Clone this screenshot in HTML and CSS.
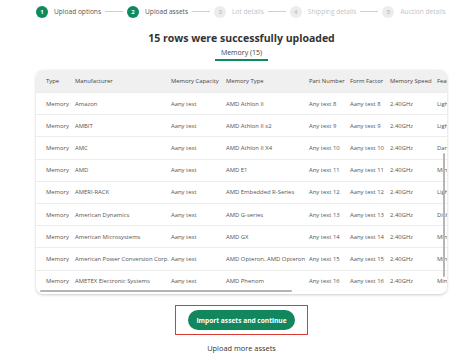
FILE: index.html
```html
<!DOCTYPE html>
<html>
<head>
  <meta charset="utf-8">
  <link rel="stylesheet" href="styles.css">
</head>
<body>
  <div class="page">
    <div class="stepper">
      <div class="step step-done"><span class="step-num">1</span><span class="step-label">Upload options</span></div>
      <div class="step-line"></div>
      <div class="step step-done"><span class="step-num">2</span><span class="step-label">Upload assets</span></div>
      <div class="step-line"></div>
      <div class="step"><span class="step-num">3</span><span class="step-label">Lot details</span></div>
      <div class="step-line"></div>
      <div class="step"><span class="step-num">4</span><span class="step-label">Shipping details</span></div>
      <div class="step-line"></div>
      <div class="step"><span class="step-num">5</span><span class="step-label">Auction details</span></div>
    </div>

    <h1 class="title">15 rows were successfully uploaded</h1>
    <div class="tabs">
      <span class="tab tab-active">Memory (15)</span>
    </div>

    <div class="table-card">
      <table class="assets">
        <colgroup>
          <col style="width: 39px">
          <col style="width: 96px">
          <col style="width: 55px">
          <col style="width: 83px">
          <col style="width: 41px">
          <col style="width: 40px">
          <col style="width: 47px">
          <col style="width: 60px">
        </colgroup>
        <thead>
          <tr>
            <th>Type</th><th>Manufacturer</th><th>Memory Capacity</th><th>Memory Type</th><th>Part Number</th><th>Form Factor</th><th>Memory Speed</th><th>Features</th>
          </tr>
        </thead>
        <tbody>
          <tr><td>Memory</td><td>Amazon</td><td>Aany text</td><td>AMD Athlon II</td><td>Any text 8</td><td>Aany text 8</td><td>2.40GHz</td><td>Light</td></tr>
          <tr><td>Memory</td><td>AMBIT</td><td>Aany text</td><td>AMD Athlon II x2</td><td>Any text 9</td><td>Aany text 9</td><td>2.40GHz</td><td>Light</td></tr>
          <tr><td>Memory</td><td>AMC</td><td>Aany text</td><td>AMD Athlon II X4</td><td>Any text 10</td><td>Aany text 10</td><td>2.40GHz</td><td>Dark</td></tr>
          <tr><td>Memory</td><td>AMD</td><td>Aany text</td><td>AMD E1</td><td>Any text 11</td><td>Aany text 11</td><td>2.40GHz</td><td>Mini</td></tr>
          <tr><td>Memory</td><td>AMERI-RACK</td><td>Aany text</td><td>AMD Embedded R-Series</td><td>Any text 12</td><td>Aany text 12</td><td>2.40GHz</td><td>Light</td></tr>
          <tr><td>Memory</td><td>American Dynamics</td><td>Aany text</td><td>AMD G-series</td><td>Any text 13</td><td>Aany text 13</td><td>2.40GHz</td><td>Dish</td></tr>
          <tr><td>Memory</td><td>American Microsystems</td><td>Aany text</td><td>AMD GX</td><td>Any text 14</td><td>Aany text 14</td><td>2.40GHz</td><td>Mini</td></tr>
          <tr><td>Memory</td><td>American Power Conversion Corp.</td><td>Aany text</td><td>AMD Opteron, AMD Opteron</td><td>Any text 15</td><td>Aany text 15</td><td>2.40GHz</td><td>Mini</td></tr>
          <tr><td>Memory</td><td>AMETEX Electronic Systems</td><td>Aany text</td><td>AMD Phenom</td><td>Any text 16</td><td>Aany text 16</td><td>2.40GHz</td><td>Mini</td></tr>
        </tbody>
      </table>
      <div class="scroll-v"></div>
      <div class="scroll-h"></div>
    </div>

    <div class="actions">
      <div class="highlight">
        <button class="btn-primary">Import assets and continue</button>
      </div>
      <a class="link">Upload more assets</a>
    </div>
  </div>
</body>
</html>
```

FILE: styles.css
```css
body {
  margin: 0;
  font-family: "Open Sans", "DejaVu Sans", sans-serif;
  color: #333;
  background: #fff;
}

.page {
  width: 411px;
  margin-left: 36px;
}

/* stepper */
.stepper {
  display: flex;
  align-items: center;
  height: 23px;
  font-size: 6.6px;
  white-space: nowrap;
}

.step {
  display: flex;
  align-items: center;
  flex-shrink: 0;
  color: #c4c4c4;
}

.step-num {
  width: 12px;
  height: 12px;
  border-radius: 50%;
  background: #ececec;
  color: #c4c4c4;
  font-size: 6px;
  font-weight: 700;
  display: flex;
  align-items: center;
  justify-content: center;
  margin-right: 6px;
}

.step-done {
  color: #555;
}

.step-done .step-num {
  background: #0e8a5f;
  color: #fff;
}

.step-line {
  flex-shrink: 0;
  width: 18px;
  height: 1px;
  background: #cfcfcf;
  margin: 0 4px;
}

/* heading */
.title {
  margin: 8px 0 0 0;
  text-align: center;
  font-size: 10.5px;
  font-weight: 700;
  color: #333;
}

.tabs {
  display: flex;
  justify-content: center;
  margin-top: 3px;
}

.tab {
  font-size: 7px;
  color: #444;
  padding: 0 6px 2px;
  border-bottom: 2px solid transparent;
}

.tab-active {
  border-bottom-color: #0e8a5f;
}

/* table */
.table-card {
  position: relative;
  margin-top: 9px;
  height: 224px;
  border-radius: 7px;
  overflow: hidden;
  box-shadow: 0 1px 3px rgba(0, 0, 0, 0.2);
  background: #fff;
}

.assets {
  table-layout: fixed;
  border-collapse: collapse;
  width: 461px;
  font-size: 5.9px;
  color: #555;
}

.assets th {
  background: #f0f0f0;
  height: 22px;
  text-align: left;
  font-weight: 400;
  color: #444;
  padding: 0;
  white-space: nowrap;
  overflow: hidden;
}

.assets td {
  height: 21.2px;
  padding: 0;
  border-top: 1px solid #ececec;
  white-space: nowrap;
}

.assets th:first-child,
.assets td:first-child {
  padding-left: 10px;
}

.scroll-v {
  position: absolute;
  right: 2px;
  top: 83px;
  width: 2px;
  height: 124px;
  background: #b5b5b5;
  border-radius: 1px;
}

.scroll-h {
  position: absolute;
  left: 4px;
  bottom: 2px;
  width: 252px;
  height: 2px;
  background: #b5b5b5;
  border-radius: 1px;
}

/* actions */
.actions {
  display: flex;
  flex-direction: column;
  align-items: center;
  margin-top: 11px;
}

.highlight {
  display: flex;
  border: 1px solid #d93a34;
  padding: 4px 12px;
}

.btn-primary {
  height: 20px;
  padding: 0 8px;
  border: none;
  border-radius: 10px;
  background: #12875d;
  color: #fff;
  font-family: inherit;
  font-size: 6.6px;
  font-weight: 700;
}

.link {
  margin-top: 8px;
  font-size: 7.4px;
  color: #333;
}
```
